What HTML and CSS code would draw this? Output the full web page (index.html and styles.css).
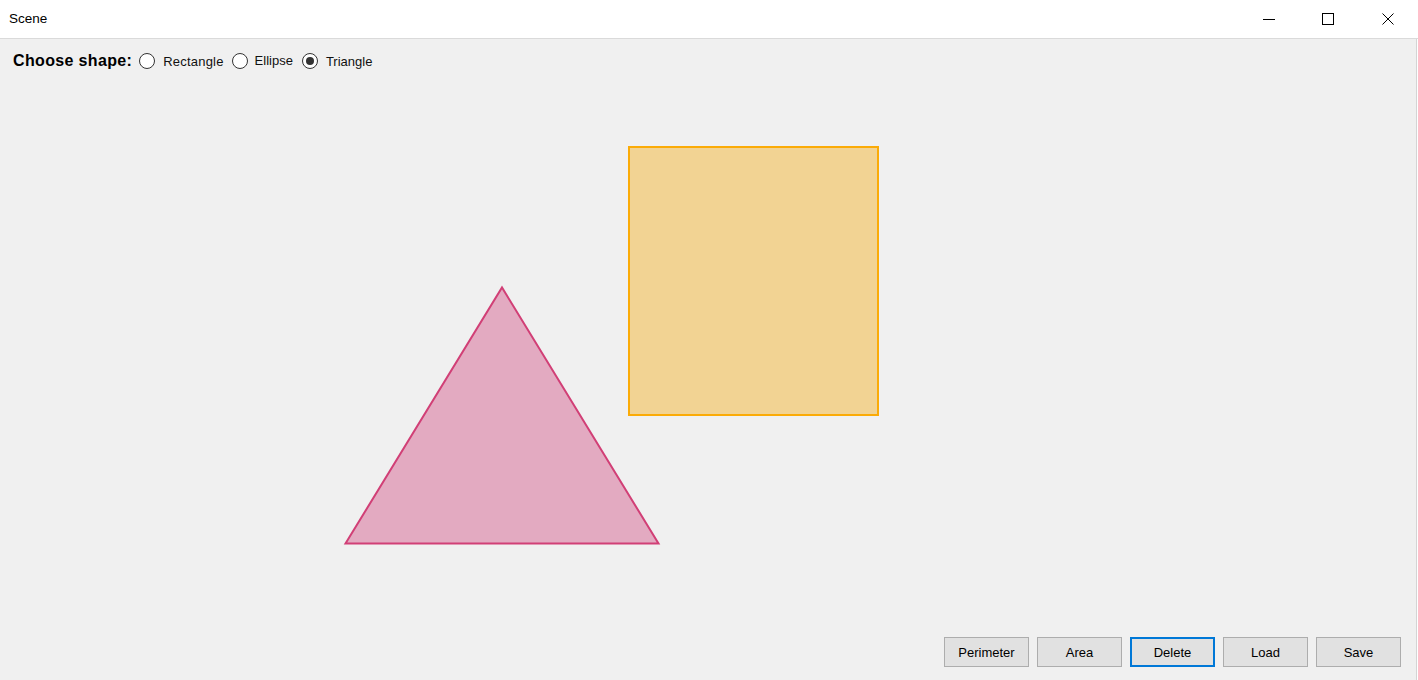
FILE: index.html
```html
<!DOCTYPE html>
<html>
<head>
<meta charset="utf-8">
<title>Scene</title>
<link rel="stylesheet" href="styles.css">
</head>
<body>
<div class="window">
  <div class="titlebar">
    <span class="title">Scene</span>
    <div class="controls">
      <span class="ctl"><svg width="12" height="12" viewBox="0 0 12 12"><line x1="0" y1="6.5" x2="12" y2="6.5" stroke="#000" stroke-width="1"/></svg></span>
      <span class="ctl"><svg width="12" height="12" viewBox="0 0 12 12"><rect x="0.5" y="0.5" width="11" height="11" fill="none" stroke="#000" stroke-width="1"/></svg></span>
      <span class="ctl"><svg width="12" height="12" viewBox="0 0 12 12"><path d="M0.5 0.5 L11.5 11.5 M11.5 0.5 L0.5 11.5" stroke="#000" stroke-width="1"/></svg></span>
    </div>
  </div>
  <div class="client">
    <div class="toolbar">
      <span class="label">Choose shape:</span>
      <label class="radio"><span class="circle"></span><span class="rtext wide">Rectangle</span></label>
      <label class="radio"><span class="circle"></span><span class="rtext">Ellipse</span></label>
      <label class="radio checked"><span class="circle"><span class="dot"></span></span><span class="rtext">Triangle</span></label>
    </div>
    <div class="canvas">
      <svg class="scene" width="1416" height="554" viewBox="0 0 1416 554">
        <rect x="629" y="64" width="249" height="268" fill="#f2d393" stroke="#fbab07" stroke-width="2"/>
        <polygon points="345.5,460.5 502,204.5 658.5,460.5" fill="#e3aac1" stroke="#d13f76" stroke-width="2" stroke-linejoin="miter"/>
      </svg>
    </div>
    <div class="footer">
      <button class="btn">Perimeter</button>
      <button class="btn">Area</button>
      <button class="btn focused">Delete</button>
      <button class="btn">Load</button>
      <button class="btn">Save</button>
    </div>
  </div>
</div>
</body>
</html>
```
FILE: styles.css
```css
html, body {
  margin: 0;
  padding: 0;
  background: #ffffff;
}
body {
  font-family: "Liberation Sans", Arial, sans-serif;
  color: #000;
}
.window {
  width: 1418px;
  height: 680px;
  display: flex;
  flex-direction: column;
  overflow: hidden;
}
.titlebar {
  height: 38px;
  flex: 0 0 38px;
  border-bottom: 1px solid #dadada;
  background: #ffffff;
  display: flex;
  align-items: center;
  justify-content: space-between;
}
.title {
  font-size: 13.5px;
  margin-left: 9px;
  margin-top: -1px;
}
.controls {
  display: flex;
  height: 38px;
}
.ctl {
  width: 58px;
  display: flex;
  align-items: center;
  justify-content: center;
  margin-top: -1px;
}
.ctl svg { display: block; }
.controls .ctl:nth-child(1) { width: 58px; }
.controls .ctl:nth-child(2) { width: 60px; }
.controls .ctl:nth-child(3) { width: 59px; margin-right: 1px; }
.client {
  flex: 1;
  width: 1416px;
  border-right: 1px solid #d4d4d4;
  background: #f0f0f0;
  display: flex;
  flex-direction: column;
}
.toolbar {
  height: 44px;
  flex: 0 0 44px;
  display: flex;
  align-items: center;
  padding-left: 13px;
  box-sizing: border-box;
  padding-bottom: 1px;
}
.label {
  font-weight: bold;
  font-size: 16px;
  letter-spacing: 0.35px;
  margin-right: 7px;
  color: #000;
}
.radio {
  display: flex;
  align-items: center;
  margin-right: 8px;
}
.circle {
  width: 16px;
  height: 16px;
  box-sizing: border-box;
  border: 1px solid #333;
  border-radius: 50%;
  background: #fff;
  display: flex;
  align-items: center;
  justify-content: center;
}
.dot {
  width: 8px;
  height: 8px;
  border-radius: 50%;
  background: #333;
}
.rtext {
  font-size: 13px;
  margin-left: 8px;
  color: #111;
  position: relative;
  top: 1px;
}
.rtext.wide { letter-spacing: 0.2px; }
.radio:nth-of-type(2) .rtext { top: 0; margin-left: 7px; }
.radio:nth-of-type(2) { margin-right: 9px; }
.canvas {
  flex: 1;
  overflow: hidden;
}
.scene {
  display: block;
}
.footer {
  flex: 0 0 43px;
  height: 43px;
  display: flex;
  justify-content: flex-end;
  gap: 8px;
  padding-right: 15px;
  box-sizing: border-box;
}
.btn {
  width: 85px;
  height: 30px;
  box-sizing: border-box;
  border: 1px solid #adadad;
  background: #e1e1e1;
  font-family: "Liberation Sans", Arial, sans-serif;
  font-size: 13px;
  color: #000;
  padding: 0;
  margin: 0;
}
.btn.focused {
  border: 2px solid #0078d7;
}
```
